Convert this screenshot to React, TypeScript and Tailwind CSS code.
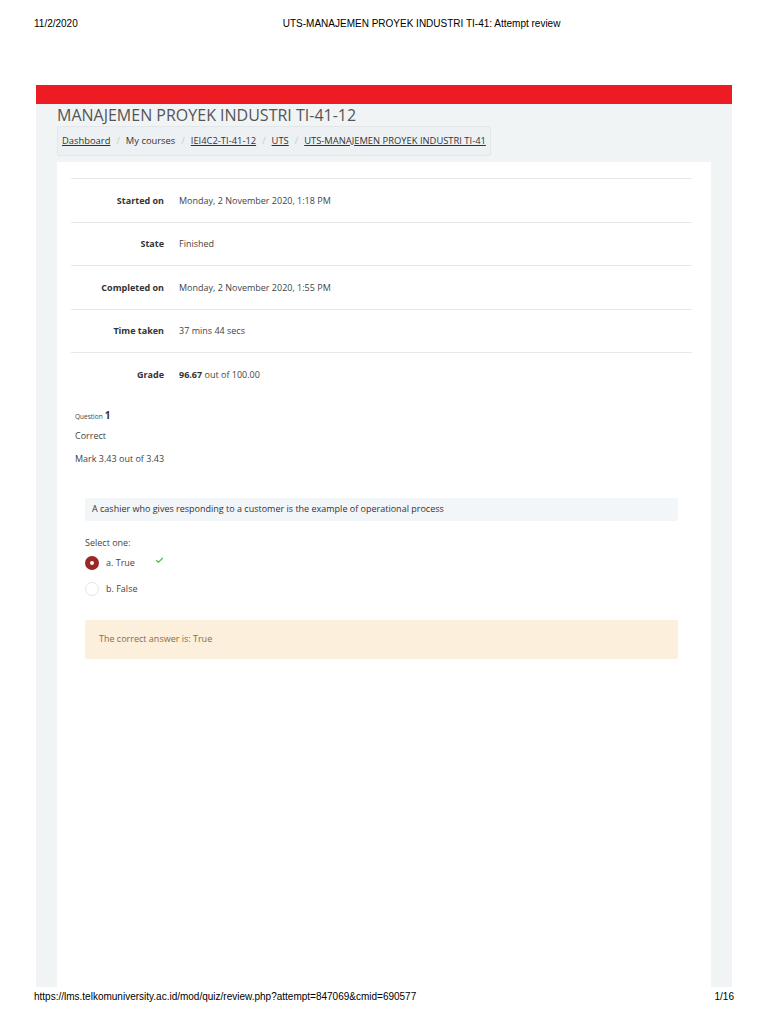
import { Check } from "lucide-react";

const summary = [
  { label: "Started on", value: "Monday, 2 November 2020, 1:18 PM" },
  { label: "State", value: "Finished" },
  { label: "Completed on", value: "Monday, 2 November 2020, 1:55 PM" },
  { label: "Time taken", value: "37 mins 44 secs" },
];

const crumbs = [
  { text: "Dashboard", link: true },
  { text: "My courses", link: false },
  { text: "IEI4C2-TI-41-12", link: true },
  { text: "UTS", link: true },
  { text: "UTS-MANAJEMEN PROYEK INDUSTRI TI-41", link: true },
];

function SummaryRow({ label, children }: { label: string; children: React.ReactNode }) {
  return (
    <div className="flex items-center h-[43.5px] border-t border-[#e6e8ea]">
      <div className="w-[93px] text-right font-bold text-[#333]">{label}</div>
      <div className="pl-[15px] text-[#444]">{children}</div>
    </div>
  );
}

export default function App() {
  return (
    <div className="w-[768px] h-[1024px] bg-white flex flex-col font-['Open_Sans',sans-serif]">
      <div className="h-[85px] pt-[18px] px-[34px] flex text-[10px] leading-[12px] text-black font-['Liberation_Sans',Arial,sans-serif]">
        <span>11/2/2020</span>
        <span className="ml-[205px]">UTS-MANAJEMEN PROYEK INDUSTRI TI-41: Attempt review</span>
      </div>

      <div className="mx-[36px] h-[902px] flex flex-col bg-[#f1f4f5]">
        <div className="h-[19px] bg-[#ed1c24]" />
        <div className="flex-1 flex flex-col pl-[21px] pr-[21px]">
          <h1 className="mt-[1px] h-[21px] leading-[21px] text-[16px] text-[#555]">
            MANAJEMEN PROYEK INDUSTRI TI-41-12
          </h1>
          <nav className="self-start h-[30px] flex items-center px-[4px] bg-[#eef1f3] border border-[#e4e7e9] rounded-[2px] text-[9.4px] text-[#333]">
            {crumbs.map((c, i) => (
              <span key={c.text} className="flex items-center">
                {i > 0 && <span className="mx-[6px] text-[#c7cacc]">/</span>}
                <span className={c.link ? "underline" : ""}>{c.text}</span>
              </span>
            ))}
          </nav>

          <div className="mt-[6px] flex-1 bg-white flex flex-col text-[9px]">
            <div className="mt-[16px] ml-[14px] mr-[19px]">
              {summary.map((r) => (
                <SummaryRow key={r.label} label={r.label}>
                  {r.value}
                </SummaryRow>
              ))}
              <SummaryRow label="Grade">
                <span className="font-bold text-[#333]">96.67</span> out of 100.00
              </SummaryRow>
            </div>

            <div className="ml-[18px] mt-[12px] text-[#444]">
              <div className="h-[16px] flex items-baseline">
                <span className="text-[6.5px]">Question</span>
                <span className="ml-[2px] text-[10px] font-bold text-[#333]">1</span>
              </div>
              <div className="mt-[5px] h-[14px] leading-[14px]">Correct</div>
              <div className="mt-[9px] h-[14px] leading-[14px]">Mark 3.43 out of 3.43</div>
            </div>

            <div className="ml-[28px] mr-[33px] mt-[32px] text-[#444]">
              <div className="h-[23px] flex items-center px-[7px] bg-[#f3f6f9] rounded-[2px] text-[#333]">
                A cashier who gives responding to a customer is the example of operational process
              </div>
              <div className="mt-[15px] h-[14px] leading-[14px]">Select one:</div>
              <div className="mt-[5px] h-[17px] flex items-center">
                <span className="w-[14px] h-[14px] rounded-full bg-[#9b2727] flex items-center justify-center">
                  <span className="w-[4px] h-[4px] rounded-full bg-white" />
                </span>
                <span className="ml-[7px]">a. True</span>
                <Check className="ml-[20px] -mt-[5px] w-[9px] h-[9px] text-[#5cb85c]" strokeWidth={3.5} />
              </div>
              <div className="mt-[9px] h-[17px] flex items-center">
                <span className="w-[14px] h-[14px] rounded-full bg-white border border-[#e2e4e6]" />
                <span className="ml-[7px]">b. False</span>
              </div>
              <div className="mt-[22px] h-[39px] flex items-center px-[14px] bg-[#fcefdc] rounded-[2px] text-[#8a6d3b]">
                The correct answer is: True
              </div>
            </div>
          </div>
        </div>
      </div>

      <div className="mt-[4px] px-[34px] flex justify-between text-[10px] leading-[12px] text-black font-['Liberation_Sans',Arial,sans-serif]">
        <span>https://lms.telkomuniversity.ac.id/mod/quiz/review.php?attempt=847069&amp;cmid=690577</span>
        <span>1/16</span>
      </div>
    </div>
  );
}
